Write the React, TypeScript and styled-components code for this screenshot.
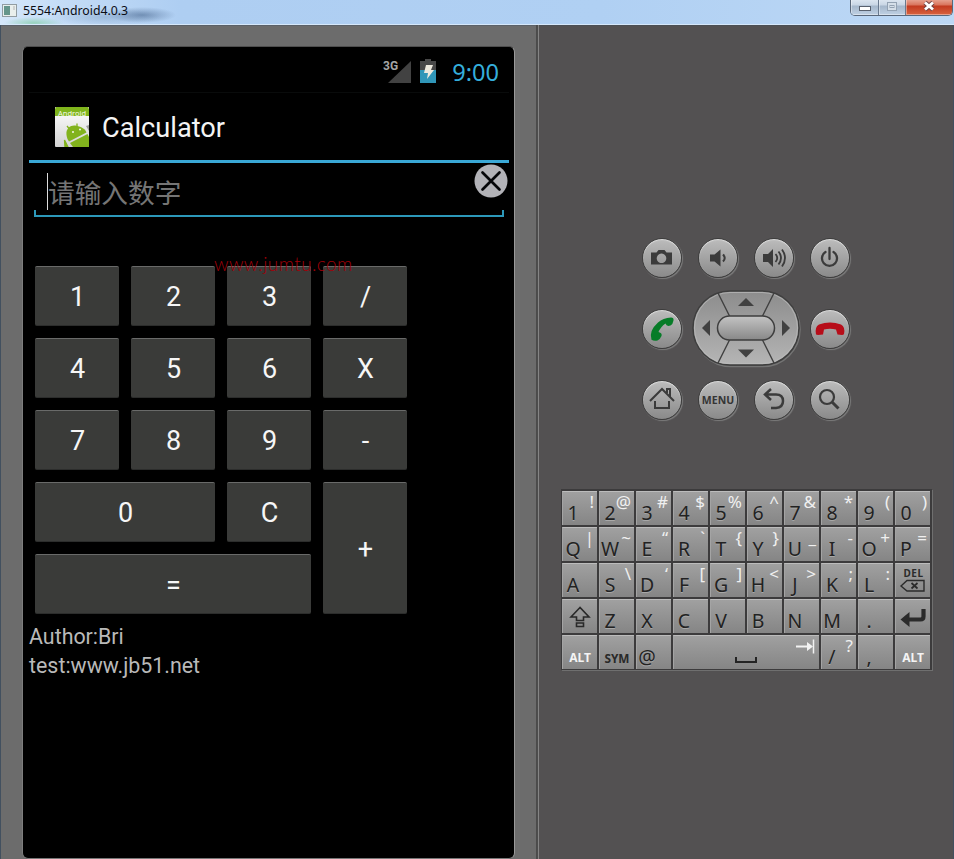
import React from 'react';
import styled, { createGlobalStyle } from 'styled-components';

const Global = createGlobalStyle`
  * { box-sizing: border-box; }
  html, body { margin: 0; padding: 0; overflow: hidden; background: #b4d2f2; }
`;

const Window = styled.div`
  width: 954px;
  height: 859px;
  display: flex;
  flex-direction: column;
  overflow: hidden;
  font-family: Roboto, "Noto Sans", sans-serif;
`;

const TitleBar = styled.header`
  height: 25px;
  flex: none;
  display: flex;
  align-items: flex-start;
  padding: 0 1px 0 2px;
  border-bottom: 1px solid #d6e8fa;
  background:
    radial-gradient(ellipse 30px 6px at 34px 23px, rgba(130, 205, 165, 0.7), transparent),
    radial-gradient(ellipse 34px 8px at 142px 15px, rgba(75, 105, 145, 0.6), transparent),
    radial-gradient(ellipse 55px 9px at 105px 17px, rgba(100, 135, 175, 0.35), transparent),
    linear-gradient(90deg, #d5e7fa 0, #c2dbf6 70px, #aecef2 180px, #b0d0f3 600px, #bdd8f5 954px);
`;

const TitleIcon = styled.svg`
  width: 15px;
  height: 13px;
  margin-top: 4px;
  flex: none;
`;

const TitleText = styled.span`
  flex: 1;
  margin: 2px 0 0 6px;
  font: 12.3px/17px "Noto Sans", sans-serif;
  letter-spacing: 0;
  color: #0a0d14;
`;

const Controls = styled.div`
  display: flex;
  height: 16px;
  border: 1px solid #59677a;
  border-top: 0;
  border-radius: 0 0 5px 5px;
  overflow: hidden;
`;

const Control = styled.div<{ $w: number; $close?: boolean }>`
  width: ${p => p.$w}px;
  display: flex;
  justify-content: center;
  border-right: ${p => (p.$close ? 0 : '1px solid #69798e')};
  background: ${p => p.$close
    ? 'linear-gradient(#e6a08e 0, #d9745c 5px, #c23a20 6px, #d8633f 15px)'
    : 'linear-gradient(#dbe5f0 0, #c9d6e5 5px, #a5b7cb 6px, #bfd0e3 15px)'};
  box-shadow: inset 1px -1px 0 rgba(255, 255, 255, 0.4);
`;

const Body = styled.main`
  flex: 1;
  display: flex;
  min-height: 0;
  padding: 0 1px;
  background: #42505f;
`;

const ScreenPanel = styled.section`
  width: 535px;
  flex: none;
  padding: 20px 0 0 21px;
  background: #6c6c6c;
  border-top: 1px solid #5b6169;
`;

const Divider = styled.div`
  width: 3px;
  flex: none;
  border-left: 1px solid #4b4b4b;
  border-right: 1px solid #858585;
  background: #4d4d4d;
`;

const ControlPanel = styled.section`
  flex: 1;
  display: flex;
  flex-direction: column;
  align-items: flex-start;
  background: #535152;
  border-top: 1px solid #4b4f55;
`;

const Phone = styled.div`
  width: 493px;
  height: 813px;
  background: #000;
  border: 1px solid #999;
  border-top-color: #4e4e4e;
  border-left-color: #7e7e7e;
  border-bottom-color: #777;
  border-radius: 6px;
  padding: 1px 5px 0 6px;
  display: flex;
  flex-direction: column;
`;

const StatusBar = styled.div`
  height: 45px;
  flex: none;
  display: flex;
  align-items: center;
  justify-content: flex-end;
  padding: 2px 10px 0 0;
  border-bottom: 1px solid #090b0b;
`;

const Network = styled.svg`
  width: 30px;
  height: 26px;
  text { font: 700 12px Roboto, sans-serif; fill: #a5a5a5; }
`;

const Battery = styled.svg`
  width: 16px;
  height: 24px;
  margin-left: 8px;
`;

const Clock = styled.span`
  margin: 1px 0 0 16px;
  font: 400 23.6px/32px "Noto Sans", sans-serif;
  color: #35aedb;
`;

const ActionBar = styled.div`
  height: 70px;
  flex: none;
  display: flex;
  align-items: center;
  padding-left: 26px;
  border-bottom: 3px solid #3aa8d6;
`;

const AppIcon = styled.svg`
  width: 34px;
  height: 40px;
  text { font: 400 7.5px "Noto Sans", sans-serif; fill: #f5fbe8; }
`;

const AppTitle = styled.h1`
  margin: 2px 0 0 13px;
  font: 400 27.2px/36px Roboto, sans-serif;
  color: #f4f4f4;
`;

const EntryRow = styled.div`
  height: 54px;
  flex: none;
  display: flex;
  position: relative;
  padding: 0 5px;
`;

const Entry = styled.div`
  flex: 1;
  display: flex;
  align-items: center;
  padding-left: 13px;
  background:
    linear-gradient(#2c98b9, #2c98b9) left bottom / 100% 2px no-repeat,
    linear-gradient(#2c98b9, #2c98b9) left bottom / 2px 7px no-repeat,
    linear-gradient(#2c98b9, #2c98b9) right bottom / 2px 7px no-repeat;
`;

const Caret = styled.i`
  width: 1px;
  height: 37px;
  margin-top: 3px;
  background: #ddd;
`;

const Placeholder = styled.span`
  margin-top: 3px;
  font: 400 26.7px/36px "Noto Sans CJK SC", sans-serif;
  color: #757575;
`;

const Clear = styled.svg`
  position: absolute;
  right: 1px;
  top: 1px;
  width: 34px;
  height: 34px;
`;

const Watermark = styled.div`
  position: absolute;
  left: 185px;
  top: 89px;
  font: 300 19px/24px Lato, sans-serif;
  letter-spacing: 0.4px;
  color: #a00008;
  white-space: nowrap;
`;

const Keypad = styled.div`
  display: grid;
  grid-template-columns: repeat(4, 84px);
  grid-auto-rows: 60px;
  gap: 12px;
  margin: 49px 0 0 6px;
`;

const PadKey = styled.button<{ $cols: number; $rows: number }>`
  grid-column: span ${p => p.$cols};
  grid-row: span ${p => p.$rows};
  border: 0;
  border-top: 1px solid #696a69;
  border-bottom: 1px solid #2c2d2c;
  border-radius: 2px;
  background: #3a3b39;
  color: #f6f6f6;
  padding: 1px 0 0 1px;
  font: 400 27px/32px Roboto, sans-serif;
`;

const Credits = styled.p`
  margin: 8px 0 0;
  font: 400 21.4px/29px Roboto, sans-serif;
  color: #b9b9b9;
  white-space: pre-line;
`;

const HardwarePad = styled.div`
  display: grid;
  grid-template-columns: 40px 40px 40px 40px;
  grid-template-rows: 40px 74px 40px;
  column-gap: 16px;
  row-gap: 14px;
  align-items: center;
  margin: 212px 0 0 103px;
`;

const RoundKey = styled.button`
  width: 40px;
  height: 40px;
  padding: 0;
  border: 1px solid #3d3d3d;
  border-radius: 50%;
  background: linear-gradient(#bcbcbc, #8a8a8a);
  box-shadow: inset 0 1px 1px #ddd, 1px 1px 1px #7d7d7d;
  display: flex;
  align-items: center;
  justify-content: center;
  font: 700 10.5px "Noto Sans", sans-serif;
  color: #353535;
  svg { flex: none; width: 38px; height: 38px; }
`;

const DPad = styled.svg`
  grid-column: 2 / span 2;
  width: 108px;
  height: 76px;
  margin: -2px 0 0 -6px;
  overflow: visible;
`;

const Keyboard = styled.div`
  display: grid;
  grid-template-columns: repeat(10, 35px);
  grid-auto-rows: 34px;
  gap: 2px;
  width: 371px;
  margin: 69px 0 0 22px;
  padding: 2px 0 1px 1px;
  background: #3c3b3c;
  box-shadow: 1px 1px 0 #6f6f6f;
`;

const Key = styled.button<{ $span: number }>`
  grid-column: span ${p => p.$span};
  display: flex;
  position: relative;
  padding: 0;
  border: 0;
  border-top: 1px solid #bcbcbc;
  border-left: 1px solid #a4a4a4;
  background: linear-gradient(#a0a0a0, #858585);
`;

const Main = styled.span`
  width: 22px;
  margin: 7px 0 0 -1px;
  font: 400 19.5px/28px "Noto Sans", sans-serif;
  text-align: center;
  color: #222;
  text-shadow: 0 1px 0 #a8a8a8;
`;

const Alt = styled.span`
  position: absolute;
  right: 3px;
  top: -2px;
  font: 400 17px/24px "Noto Sans", sans-serif;
  color: #f0f0f0;
`;

const Word = styled.span<{ $light?: boolean }>`
  width: 100%;
  margin-top: 12px;
  font: 700 ${p => (p.$light ? 12 : 11.8)}px/20px "Noto Sans", sans-serif;
  text-align: center;
  color: ${p => (p.$light ? '#f4f4f4' : '#292929')};
`;

const KeyArt = styled.svg`
  width: 100%;
  height: 33px;
  overflow: visible;
  text { font: 700 10px "Noto Sans", sans-serif; fill: #2b2b2b; letter-spacing: 0.5px; }
`;

const padKeys: [string, number, number][] = [
  ['1', 1, 1], ['2', 1, 1], ['3', 1, 1], ['/', 1, 1],
  ['4', 1, 1], ['5', 1, 1], ['6', 1, 1], ['X', 1, 1],
  ['7', 1, 1], ['8', 1, 1], ['9', 1, 1], ['-', 1, 1],
  ['0', 2, 1], ['C', 1, 1], ['+', 1, 2], ['=', 3, 1],
];

const letterKeys: string[][] = [
  ['1', '!'], ['2', '@'], ['3', '#'], ['4', '$'], ['5', '%'], ['6', '^'], ['7', '&'], ['8', '*'], ['9', '('], ['0', ')'],
  ['Q', '|'], ['W', '~'], ['E', '“'], ['R', '`'], ['T', '{'], ['Y', '}'], ['U', '_'], ['I', '-'], ['O', '+'], ['P', '='],
  ['A'], ['S', '\\'], ['D', '‘'], ['F', '['], ['G', ']'], ['H', '<'], ['J', '>'], ['K', ';'], ['L', ':'], ['del'],
  ['shift'], ['Z'], ['X'], ['C'], ['V'], ['B'], ['N'], ['M'], ['.'], ['enter'],
  ['ALT'], ['SYM'], ['@'], ['space'], ['/', '?'], [','], ['ALT'],
];

const ink = '#3b3b3b';

function KeyFace({ label, alt }: { label: string; alt?: string }) {
  switch (label) {
    case 'ALT': return <Word $light>ALT</Word>;
    case 'SYM': return <Word>SYM</Word>;
    case 'del':
      return (
        <KeyArt viewBox="0 0 34 33">
          <text x="7.5" y="13">DEL</text>
          <path d="M5 22l6-5.500h17v10.500H11z" fill="none" stroke="#2b2b2b" strokeWidth="1.4" />
          <path d="M15.500 19l6 5.500m0-5.500l-6 5.500" stroke="#2b2b2b" strokeWidth="1.7" />
        </KeyArt>
      );
    case 'shift':
      return (
        <KeyArt viewBox="0 0 34 33">
          <path d="M17 7.500L8 17h5.500v3.500h7V17H26z M13.500 23h7v3.500h-7z" fill="none" stroke="#292929" strokeWidth="1.6" />
        </KeyArt>
      );
    case 'enter':
      return (
        <KeyArt viewBox="0 0 34 33">
          <path d="M27.500 9v7.500q0 3-3 3H12" fill="none" stroke="#2b2b2b" strokeWidth="4.200" />
          <path d="M4.500 19.500L13.500 12v15z" fill="#2b2b2b" />
        </KeyArt>
      );
    case 'space':
      return (
        <KeyArt viewBox="0 0 145 33">
          <path d="M62 21v5h20v-5" fill="none" stroke="#242424" strokeWidth="2" />
          <path d="M122 10.500h13" stroke="#f2f2f2" strokeWidth="2" />
          <path d="M133 6l6 4.500-6 4.500z" fill="#f2f2f2" />
          <path d="M139.500 3.500v14" stroke="#f2f2f2" strokeWidth="1.500" />
        </KeyArt>
      );
    default:
      return <><Main>{label}</Main>{alt && <Alt>{alt}</Alt>}</>;
  }
}

function DirectionPad() {
  return (
    <DPad viewBox="0 0 108 76">
      <defs>
        <linearGradient id="ring" x1="0" y1="0" x2="0" y2="1">
          <stop offset="0" stopColor="#8c8c8c" /><stop offset="1" stopColor="#b5b5b5" />
        </linearGradient>
        <linearGradient id="center" x1="0" y1="0" x2="0" y2="1">
          <stop offset="0" stopColor="#c4c4c4" /><stop offset="1" stopColor="#888" />
        </linearGradient>
      </defs>
      <path d="M38 2h32a37 37 0 0 1 0 74H38a37 37 0 0 1 0-74z" fill="none" stroke="#747474" strokeWidth="1.5" transform="translate(1 .5)" />
      <path d="M38 1h32a37 37 0 0 1 0 74H38a37 37 0 0 1 0-74z" fill="url(#ring)" stroke="#3e3e3e" strokeWidth="1.5" />
      <path d="M38 2.500h32a35.500 35.500 0 0 1 0 71H38a35.500 35.500 0 0 1 0-71z" fill="none" stroke="#bdbdbd" strokeWidth=".7" />
      <path d="M26 3l12 24M82 3L70 27M26 73l12-24M82 73L70 49" stroke="#404040" strokeWidth="1.4" />
      <rect x="25.500" y="26" width="57" height="24" rx="12" fill="url(#center)" stroke="#3e3e3e" strokeWidth="1.500" />
      <path d="M46 16l8-8 8 8zM46 59.500h16l-8 8zM18 30v16l-8-8zM90 30v16l8-8z" fill="#414141" />
    </DPad>
  );
}

export default function App() {
  return (
    <Window>
      <Global />
      <TitleBar>
        <TitleIcon viewBox="0 0 15 13">
          <rect x=".5" y=".5" width="14" height="12" fill="#e9efed" stroke="#929da2" />
          <rect x="2" y="2" width="6" height="9" fill="#66968b" />
          <path d="M11 3h2M11 5h2" stroke="#b4b4b4" />
        </TitleIcon>
        <TitleText>5554:Android4.0.3</TitleText>
        <Controls>
          <Control $w={28}>
            <svg width="16" height="15"><rect x="2.500" y="6.500" width="11" height="4" fill="#fff" stroke="#59616e" /></svg>
          </Control>
          <Control $w={27}>
            <svg width="16" height="15">
              <rect x="3.500" y="2.500" width="9" height="8" fill="#d5dfe9" stroke="#93a2b3" />
              <rect x="6" y="5.500" width="4" height="2" fill="none" stroke="#93a2b3" />
            </svg>
          </Control>
          <Control $w={46} $close>
            <svg width="16" height="15">
              <path d="M4 2.500l8 7m0-7l-8 7" stroke="#6d4142" strokeWidth="4.600" />
              <path d="M4 2.500l8 7m0-7l-8 7" stroke="#fff" strokeWidth="2.900" />
            </svg>
          </Control>
        </Controls>
      </TitleBar>
      <Body>
        <ScreenPanel>
          <Phone>
            <StatusBar>
              <Network viewBox="0 0 30 26">
                <path d="M29 3v22H6z" fill="#424242" />
                <text x="1" y="12">3G</text>
              </Network>
              <Battery viewBox="0 0 16 24">
                <path d="M0 2h5V0h6v2h5v10H0z" fill="#484848" />
                <path d="M0 11h16v13H0z" fill="#3096b8" />
                <path d="M6 6h7l-2 5h3l-7 9 1-6H4z" fill="#eeeade" />
              </Battery>
              <Clock>9:00</Clock>
            </StatusBar>
            <ActionBar>
              <AppIcon viewBox="0 0 34 40">
                <defs>
                  <linearGradient id="paper" x1="0" y1="0" x2="0" y2="1">
                    <stop offset="0" stopColor="#fff" /><stop offset="1" stopColor="#d3d3d3" />
                  </linearGradient>
                </defs>
                <rect width="34" height="40" rx="1" fill="url(#paper)" />
                <path d="M1 0h32l1 2v7H0V2z" fill="#80b51c" />
                <text x="3" y="9">Android</text>
                <path d="M11.500 28C10.500 21 16 18 20 18.500S30 21 31.500 25.500L14 34.500C12.500 32.500 12 31 11.500 28z" fill="#82b31d" />
                <path d="M15 36l17.500-9L34 30v10H18z" fill="#82b31d" />
                <path d="M9.500 33l3.500 7h-3zM14.500 22l-2.500-3M22 20v-3.500" fill="#82b31d" stroke="#82b31d" strokeWidth="1.300" />
                <path d="M31 19l3-1v6z" fill="#9b9b9b" />
                <circle cx="18" cy="25" r=".9" fill="#fff" /><circle cx="25" cy="22.500" r=".9" fill="#fff" />
              </AppIcon>
              <AppTitle>Calculator</AppTitle>
            </ActionBar>
            <EntryRow>
              <Entry><Caret /><Placeholder>请输入数字</Placeholder></Entry>
              <Clear viewBox="0 0 34 34">
                <circle cx="17" cy="17" r="16.500" fill="#b2b2b7" />
                <path d="M8.500 8.500l17 17m0-17l-17 17" stroke="#050609" strokeWidth="2.700" strokeLinecap="round" />
              </Clear>
              <Watermark>www.jumtu.com</Watermark>
            </EntryRow>
            <Keypad>
              {padKeys.map(([label, cols, rows]) => (
                <PadKey key={label} $cols={cols} $rows={rows}>{label}</PadKey>
              ))}
            </Keypad>
            <Credits>{'Author:Bri\ntest:www.jb51.net'}</Credits>
          </Phone>
        </ScreenPanel>
        <Divider />
        <ControlPanel>
          <HardwarePad>
            <RoundKey aria-label="Camera">
              <svg viewBox="0 0 38 38">
                <path fillRule="evenodd" d="M8 13.500h5.500l2-2.500h6l2 2.500H29v12H8zM18.500 14.500a4.800 4.800 0 1 0 .01 0z" fill={ink} />
              </svg>
            </RoundKey>
            <RoundKey aria-label="Volume down">
              <svg viewBox="0 0 38 38">
                <path d="M11 15.500h4.500l6-5v17l-6-5H11z" fill={ink} />
                <path d="M24 15.500q3.500 3.500 0 7" fill="none" stroke={ink} strokeWidth="2" />
              </svg>
            </RoundKey>
            <RoundKey aria-label="Volume up">
              <svg viewBox="0 0 38 38">
                <path d="M8 15h5l5-5v18l-5-5H8z" fill={ink} />
                <path d="M20.500 15q3.500 4 0 8M23.500 12.500q5 6.500 0 13M27 10.500q6 8.500 0 17" fill="none" stroke={ink} strokeWidth="1.800" />
              </svg>
            </RoundKey>
            <RoundKey aria-label="Power">
              <svg viewBox="0 0 38 38">
                <path d="M14.500 13a7.500 7.500 0 1 0 8 0M18.500 9v11" fill="none" stroke={ink} strokeWidth="2.300" strokeLinecap="round" />
              </svg>
            </RoundKey>
            <RoundKey aria-label="Call">
              <svg viewBox="0 0 38 38">
                <path d="M15 12.500Q20 8 28 7.500q3 .2 2.500 3-.5 3.500-3 5-4 1.500-5-2Q17.500 17 15.500 22q4 1 3 4-1.500 3.500-4 4.500-3.500 1-6-.8Q5.500 21 15 12.500z" fill="#077c28" />
              </svg>
            </RoundKey>
            <DirectionPad />
            <RoundKey aria-label="End call">
              <svg viewBox="0 0 38 38">
                <path d="M5 24.500Q3.500 17 8 14.500q11-4 22 0 4.500 2.500 3 9.500-.5 1-2 1l-4.500-.5-1.500-5q-6-1.500-12 0l-1 5-5 .5z" fill="#b70d19" />
              </svg>
            </RoundKey>
            <RoundKey aria-label="Home">
              <svg viewBox="0 0 38 38">
                <path d="M7 20L19 8l12 12M24 12V8h3v8M12 20v7h14v-7" fill="none" stroke={ink} strokeWidth="2" />
              </svg>
            </RoundKey>
            <RoundKey>MENU</RoundKey>
            <RoundKey aria-label="Back">
              <svg viewBox="0 0 38 38">
                <path d="M16 8l-6 5.500 6 5.500M11 13.500h10q7 0 7 6.500t-7 7h-5" fill="none" stroke={ink} strokeWidth="2.500" />
              </svg>
            </RoundKey>
            <RoundKey aria-label="Search">
              <svg viewBox="0 0 38 38">
                <circle cx="16" cy="16" r="7" fill="none" stroke={ink} strokeWidth="2.200" />
                <path d="M21 21l6.500 6.500" stroke={ink} strokeWidth="3" />
              </svg>
            </RoundKey>
          </HardwarePad>
          <Keyboard>
            {letterKeys.map(([label, alt], i) => (
              <Key key={i} $span={label === 'space' ? 4 : 1}><KeyFace label={label} alt={alt} /></Key>
            ))}
          </Keyboard>
        </ControlPanel>
      </Body>
    </Window>
  );
}
